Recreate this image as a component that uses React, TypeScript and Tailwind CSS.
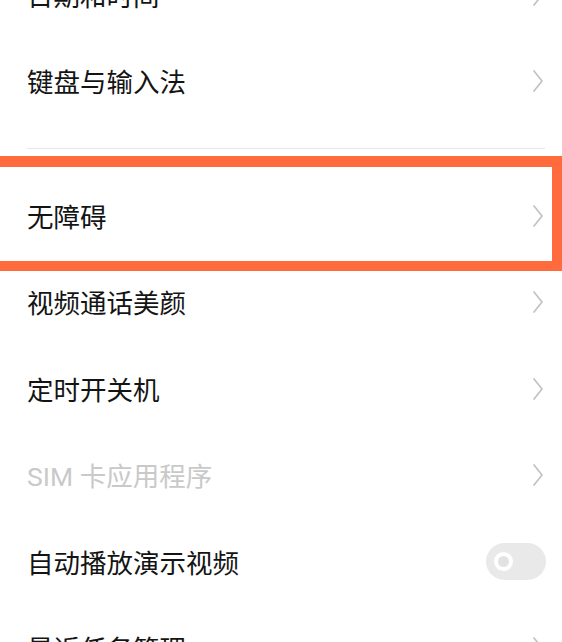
import React from "react";

const Chevron = () => (
  <svg width="10" height="22" viewBox="0 0 10 22" fill="none">
    <polyline points="1,1 9,11 1,21" stroke="#c2c2c2" strokeWidth="1.7" strokeLinecap="round" strokeLinejoin="round" />
  </svg>
);

const Toggle = () => (
  <div className="flex h-[37px] w-[60px] items-center rounded-full bg-[#e9e9e9] pl-[8px]">
    <div className="h-[19px] w-[19px] rounded-full border-[4px] border-white bg-[#e2e2e2]" />
  </div>
);

type RowProps = { label: string; disabled?: boolean; toggle?: boolean };

const Row = ({ label, disabled, toggle }: RowProps) => (
  <div className={`flex h-[86.5px] items-center justify-between pl-[27px] ${toggle ? "pr-[16px]" : "pr-[19px]"}`}>
    <span className={`mt-[4px] text-[26.5px] leading-none ${disabled ? "text-[#c9c9c9]" : "text-[#141414]"}`}>{label}</span>
    {toggle ? <Toggle /> : <Chevron />}
  </div>
);

export default function App() {
  return (
    <div
      className="relative h-[642px] w-[562px] overflow-hidden bg-white"
      style={{ fontFamily: "Roboto, 'Noto Sans CJK SC', sans-serif" }}
    >
      <div className="-mt-[48.5px] flex flex-col">
        <Row label="日期和时间" />
        <Row label="键盘与输入法" />
        <div className="flex h-[48px] flex-col pl-[27px] pr-[17px] pt-[23px]">
          <div className="h-px bg-[#e6e6ee]" />
        </div>
        <Row label="无障碍" />
        <Row label="视频通话美颜" />
        <Row label="定时开关机" />
        <Row label="SIM 卡应用程序" disabled />
        <Row label="自动播放演示视频" toggle />
        <Row label="最近任务管理" />
      </div>
      <div className="pointer-events-none absolute left-[-12px] right-0 top-[156px] h-[115px] border-[10px] border-t-[11px] border-[#ff6b3d]" />
    </div>
  );
}
